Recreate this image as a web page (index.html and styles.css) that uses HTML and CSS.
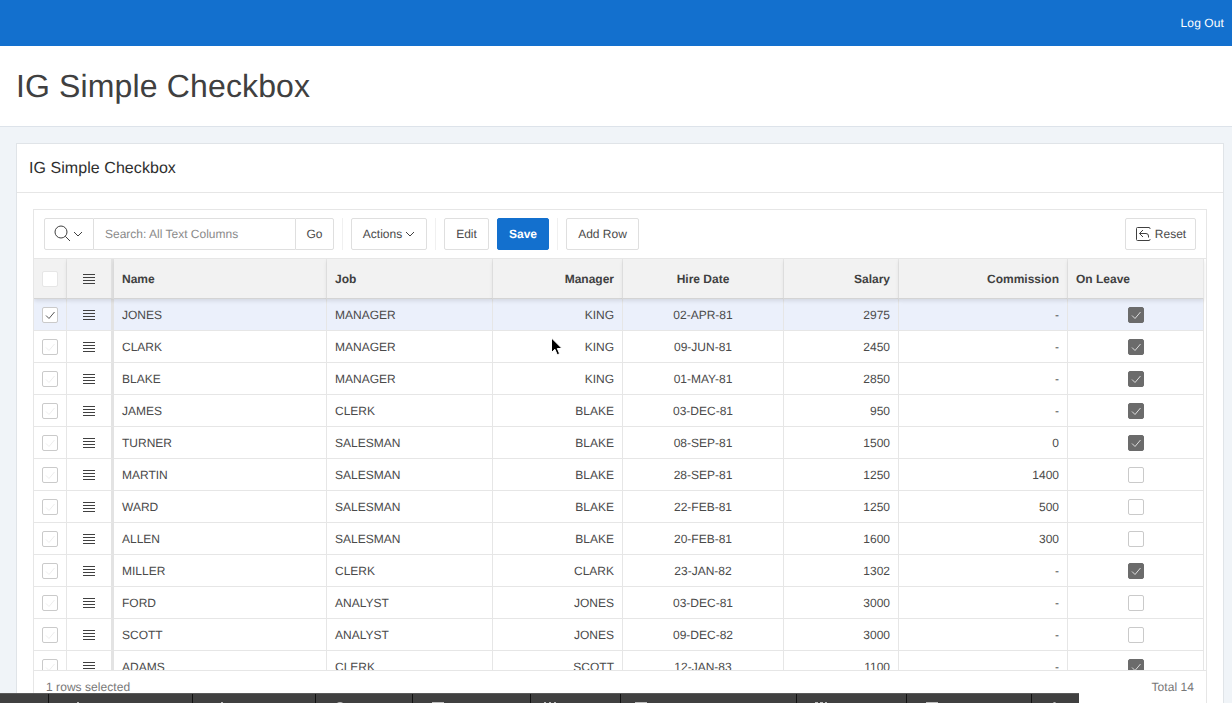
FILE: index.html
```html
<!DOCTYPE html>
<html lang="en">
<head>
<meta charset="utf-8">
<title>IG Simple Checkbox</title>
<link rel="stylesheet" href="styles.css">
</head>
<body>
<svg class="defs" width="0" height="0" aria-hidden="true">
  <symbol id="ham" viewBox="0 0 12 10"><path d="M0 .5h12M0 3.5h12M0 6.5h12M0 9.5h12" stroke="currentColor" stroke-width="1" fill="none"/></symbol>
  <symbol id="tick" viewBox="0 0 16 16"><path d="M4 8.5l3 3 5.5-6.5" stroke="currentColor" stroke-width="1" fill="none"/></symbol>
</svg>
<header class="topbar"><a class="logout">Log Out</a></header>
<div class="titlebar"><h1>IG Simple Checkbox</h1></div>
<main class="page">
  <section class="card">
    <h2 class="card-head">IG Simple Checkbox</h2>
    <div class="card-body">
      <div class="region">
        <div class="toolbar">
          <div class="search">
            <span class="btn search-btn">
              <svg width="18" height="18" viewBox="0 0 18 18"><circle cx="7" cy="7" r="6" fill="none" stroke="#404040"/><path d="M11.3 11.3l4.7 4.7" stroke="#404040" fill="none"/></svg>
              <svg width="10" height="6" viewBox="0 0 10 6"><path d="M1 1l4 4 4-4" stroke="#404040" fill="none"/></svg>
            </span>
            <span class="search-input">Search: All Text Columns</span>
            <span class="btn go">Go</span>
          </div>
          <span class="sep"></span>
          <span class="btn actions">Actions <svg width="10" height="6" viewBox="0 0 10 6"><path d="M1 1l4 4 4-4" stroke="#404040" fill="none"/></svg></span>
          <span class="sep"></span>
          <span class="btn edit">Edit</span>
          <span class="btn save">Save</span>
          <span class="sep"></span>
          <span class="btn add">Add Row</span>
          <span class="btn reset">
            <svg width="16" height="16" viewBox="0 0 16 16"><path d="M15 3V2.5a1 1 0 0 0-1-1H2.5a1 1 0 0 0-1 1v11a1 1 0 0 0 1 1H14a1 1 0 0 0 1-1V13" fill="none" stroke="#404040"/><path d="M8 4L4.5 7.5 8 11M4.5 7.5H11a2.5 2.5 0 0 1 2.5 2.5v1.5" fill="none" stroke="#404040"/></svg>
            Reset
          </span>
        </div>
        <div class="grid-wrap">
          <table class="grid">
            <colgroup>
              <col class="c-sel"><col class="c-act"><col class="c-name"><col class="c-job"><col class="c-mgr"><col class="c-date"><col class="c-sal"><col class="c-comm"><col class="c-leave">
            </colgroup>
            <thead>
              <tr>
                <th class="ctr"><span class="cb blank"></span></th>
                <th class="ctr frozen"><svg class="ham"><use href="#ham"/></svg></th>
                <th>Name</th><th>Job</th><th class="r">Manager</th><th class="ctr">Hire Date</th><th class="r">Salary</th><th class="r">Commission</th><th>On Leave</th>
              </tr>
            </thead>
            <tbody id="rows">
              <tr class="sel"><td class="ctr"><span class="cb"><svg class="tk on"><use href="#tick"/></svg></span></td><td class="ctr frozen"><svg class="ham"><use href="#ham"/></svg></td><td>JONES</td><td>MANAGER</td><td class="r">KING</td><td class="ctr">02-APR-81</td><td class="r">2975</td><td class="r">-</td><td class="ctr"><span class="cb dark"><svg class="tk"><use href="#tick"/></svg></span></td></tr>
              <tr><td class="ctr"><span class="cb"><svg class="tk"><use href="#tick"/></svg></span></td><td class="ctr frozen"><svg class="ham"><use href="#ham"/></svg></td><td>CLARK</td><td>MANAGER</td><td class="r">KING</td><td class="ctr">09-JUN-81</td><td class="r">2450</td><td class="r">-</td><td class="ctr"><span class="cb dark"><svg class="tk"><use href="#tick"/></svg></span></td></tr>
              <tr><td class="ctr"><span class="cb"><svg class="tk"><use href="#tick"/></svg></span></td><td class="ctr frozen"><svg class="ham"><use href="#ham"/></svg></td><td>BLAKE</td><td>MANAGER</td><td class="r">KING</td><td class="ctr">01-MAY-81</td><td class="r">2850</td><td class="r">-</td><td class="ctr"><span class="cb dark"><svg class="tk"><use href="#tick"/></svg></span></td></tr>
              <tr><td class="ctr"><span class="cb"><svg class="tk"><use href="#tick"/></svg></span></td><td class="ctr frozen"><svg class="ham"><use href="#ham"/></svg></td><td>JAMES</td><td>CLERK</td><td class="r">BLAKE</td><td class="ctr">03-DEC-81</td><td class="r">950</td><td class="r">-</td><td class="ctr"><span class="cb dark"><svg class="tk"><use href="#tick"/></svg></span></td></tr>
              <tr><td class="ctr"><span class="cb"><svg class="tk"><use href="#tick"/></svg></span></td><td class="ctr frozen"><svg class="ham"><use href="#ham"/></svg></td><td>TURNER</td><td>SALESMAN</td><td class="r">BLAKE</td><td class="ctr">08-SEP-81</td><td class="r">1500</td><td class="r">0</td><td class="ctr"><span class="cb dark"><svg class="tk"><use href="#tick"/></svg></span></td></tr>
              <tr><td class="ctr"><span class="cb"><svg class="tk"><use href="#tick"/></svg></span></td><td class="ctr frozen"><svg class="ham"><use href="#ham"/></svg></td><td>MARTIN</td><td>SALESMAN</td><td class="r">BLAKE</td><td class="ctr">28-SEP-81</td><td class="r">1250</td><td class="r">1400</td><td class="ctr"><span class="cb"></span></td></tr>
              <tr><td class="ctr"><span class="cb"><svg class="tk"><use href="#tick"/></svg></span></td><td class="ctr frozen"><svg class="ham"><use href="#ham"/></svg></td><td>WARD</td><td>SALESMAN</td><td class="r">BLAKE</td><td class="ctr">22-FEB-81</td><td class="r">1250</td><td class="r">500</td><td class="ctr"><span class="cb"></span></td></tr>
              <tr><td class="ctr"><span class="cb"><svg class="tk"><use href="#tick"/></svg></span></td><td class="ctr frozen"><svg class="ham"><use href="#ham"/></svg></td><td>ALLEN</td><td>SALESMAN</td><td class="r">BLAKE</td><td class="ctr">20-FEB-81</td><td class="r">1600</td><td class="r">300</td><td class="ctr"><span class="cb"></span></td></tr>
              <tr><td class="ctr"><span class="cb"><svg class="tk"><use href="#tick"/></svg></span></td><td class="ctr frozen"><svg class="ham"><use href="#ham"/></svg></td><td>MILLER</td><td>CLERK</td><td class="r">CLARK</td><td class="ctr">23-JAN-82</td><td class="r">1302</td><td class="r">-</td><td class="ctr"><span class="cb dark"><svg class="tk"><use href="#tick"/></svg></span></td></tr>
              <tr><td class="ctr"><span class="cb"><svg class="tk"><use href="#tick"/></svg></span></td><td class="ctr frozen"><svg class="ham"><use href="#ham"/></svg></td><td>FORD</td><td>ANALYST</td><td class="r">JONES</td><td class="ctr">03-DEC-81</td><td class="r">3000</td><td class="r">-</td><td class="ctr"><span class="cb"></span></td></tr>
              <tr><td class="ctr"><span class="cb"><svg class="tk"><use href="#tick"/></svg></span></td><td class="ctr frozen"><svg class="ham"><use href="#ham"/></svg></td><td>SCOTT</td><td>ANALYST</td><td class="r">JONES</td><td class="ctr">09-DEC-82</td><td class="r">3000</td><td class="r">-</td><td class="ctr"><span class="cb"></span></td></tr>
              <tr><td class="ctr"><span class="cb"><svg class="tk"><use href="#tick"/></svg></span></td><td class="ctr frozen"><svg class="ham"><use href="#ham"/></svg></td><td>ADAMS</td><td>CLERK</td><td class="r">SCOTT</td><td class="ctr">12-JAN-83</td><td class="r">1100</td><td class="r">-</td><td class="ctr"><span class="cb dark"><svg class="tk"><use href="#tick"/></svg></span></td></tr>
            </tbody>
          </table>
        </div>
        <div class="grid-foot"><span>1 rows selected</span><span>Total 14</span></div>
      </div>
    </div>
  </section>
</main>
<svg class="cursor" width="14" height="20" viewBox="0 0 14 20"><path d="M1.5 1v14.5l3.4-3.2 2.3 5.4 2.4-1-2.3-5.2h4.7z" fill="#000" stroke="#fff" stroke-width="1"/></svg>
<nav class="dock">
  <span class="cell"></span>
  <span class="cell"><i class="di d-a"></i></span>
  <span class="cell"><i class="di d-b"></i></span>
  <span class="cell"><i class="di d-c"></i></span>
  <span class="cell"><i class="di d-d"></i></span>
  <span class="cell"><i class="di d-e"></i></span>
  <span class="cell"><i class="di d-f"></i></span>
  <span class="cell"><i class="di d-g"></i></span>
  <span class="cell"><i class="di d-h"></i></span>
  <span class="cell"><i class="di d-i"></i></span>
</nav>
</body>
</html>
```
FILE: styles.css
```css
* { box-sizing: border-box; }
html, body { margin: 0; height: 703px; overflow: hidden; }
body { background: #f0f4f8; font-family: "Liberation Sans", Arial, sans-serif; color: #4a4a4a; font-size: 12px; position: relative; text-rendering: geometricPrecision; }
.defs { position: absolute; }

.topbar { height: 46px; background: #1370ce; display: flex; align-items: center; justify-content: flex-end; padding: 0 8px; }
.logout { color: #fff; font-size: 12px; letter-spacing: .1px; }

.titlebar { height: 81px; background: #fff; border-bottom: 1px solid #dde3ea; display: flex; align-items: center; padding: 0 16px 1px; }
.titlebar h1 { margin: 0; font-size: 32px; font-weight: 400; color: #404040; line-height: 40px; letter-spacing: .14px; }

.page { padding: 16px 8px 0 16px; }
.card { background: #fff; border: 1px solid #e0e4e8; width: 1208px; }
.card-head { margin: 0; height: 49px; border-bottom: 1px solid #e6e6e6; padding: 1px 12px 0; font-size: 16px; font-weight: 400; color: #2e2e2e; line-height: 48px; letter-spacing: .06px; }
.card-body { padding: 16px 16px 16px; }

.region { border: 1px solid #e6e6e6; width: 1174px; }

.toolbar { height: 49px; display: flex; align-items: center; padding: 0 10px; border-bottom: 1px solid #e6e6e6; }
.btn { height: 32px; border: 1px solid #dfdfdf; border-radius: 2px; background: #fff; display: inline-flex; align-items: center; justify-content: center; color: #4a4a4a; font-size: 12px; }
.search { display: flex; height: 32px; }
.search-btn { width: 50px; gap: 1px; justify-content: flex-start; padding-left: 9px; border-radius: 2px 0 0 2px; }
.search-input { width: 201px; border: 1px solid #dfdfdf; border-left: 0; border-right: 0; padding-left: 11px; line-height: 30px; color: #8a8a8a; }
.go { width: 39px; border-radius: 0 2px 2px 0; }
.sep { width: 1px; height: 32px; background: #f0f0f0; margin: 0 8px; }
.actions { width: 76px; gap: 3px; }
.edit { width: 45px; }
.save { width: 52px; margin-left: 8px; background: #1370ce; border-color: #1370ce; color: #fff; font-weight: 700; }
.add { width: 73px; }
.reset { width: 71px; margin-left: auto; gap: 4px; }

.grid-wrap { height: 411px; overflow: hidden; width: 1172px; }
.grid { border-collapse: separate; border-spacing: 0; table-layout: fixed; width: 1170px; }
.c-sel { width: 33px; } .c-act { width: 47px; } .c-name { width: 213px; } .c-job { width: 166px; } .c-mgr { width: 130px; } .c-date { width: 161px; } .c-sal { width: 115px; } .c-comm { width: 169px; } .c-leave { width: 136px; }

th, td { padding: 0 8px; border-right: 1px solid #e6e6e6; text-align: left; white-space: nowrap; overflow: hidden; }
th { height: 40px; background: #f2f2f2; font-size: 12px; font-weight: 700; color: #404040; border-bottom: 1px solid #d4d4d4; box-shadow: 0 2px 4px rgba(0,0,0,.1); position: relative; z-index: 1; overflow: visible; }
thead tr { position: relative; z-index: 2; }
td { height: 32px; border-bottom: 1px solid #e6e6e6; color: #4a4a4a; font-size: 12px; }
.sel td { background: #ebf0fb; }
.r { text-align: right; }
th.ctr, td.ctr { text-align: center; padding: 0; }
.frozen { border-right: 3px solid #e3e3e3; }

.ham { display: inline-block; width: 12px; height: 10px; color: #404040; vertical-align: middle; }
.cb { display: inline-block; width: 16px; height: 16px; border: 1px solid #cacaca; border-radius: 2px; background: #fff; vertical-align: middle; position: relative; }
.cb.blank { border-color: #e6e6e6; }
.cb.dark { background: #6b6b6b; border-color: #6b6b6b; }
.tk { position: absolute; left: -1px; top: -1px; width: 16px; height: 16px; color: #eee; }
.tk.on { color: #555; }
.dark .tk { color: #ddd; }

.grid-foot { height: 50px; border-top: 1px solid #e6e6e6; display: flex; justify-content: space-between; padding: 9px 12px; color: #777; font-size: 12px; letter-spacing: .05px; background: #fff; position: relative; z-index: 3; width: 1172px; }

.cursor { position: absolute; left: 550px; top: 337px; z-index: 5; }

.dock { position: absolute; left: 0; top: 693px; width: 1079px; height: 10px; background: #404040; border-top: 1px solid #5a5a5a; display: grid; grid-template-columns: 49px 144px 123px 97px 118px 90px 176px 110px 125px 47px; z-index: 6; }
.cell { border-right: 1px solid #111; padding-top: 8px; display: block; overflow: hidden; }
.cell:last-child { border-right: 0; }
.di { display: block; height: 4px; background: #bdbdbd; }
.d-a { width: 2px; margin-left: 28px; }
.d-b { width: 2px; margin-left: 28px; }
.d-c { width: 8px; margin-left: 20px; border-radius: 4px 4px 0 0; }
.d-d { width: 12px; margin-left: 19px; }
.d-e { width: 14px; margin-left: 13px; background: repeating-linear-gradient(90deg, #bdbdbd 0 2px, transparent 2px 5px); }
.d-f { width: 12px; margin-left: 14px; }
.d-g { width: 12px; margin-left: 18px; background: repeating-linear-gradient(90deg, #bdbdbd 0 3px, #404040 3px 5px); }
.d-h { width: 12px; margin-left: 19px; border: 1px solid #bdbdbd; background: none; }
.d-i { width: 3px; margin-left: 21px; border-radius: 2px 2px 0 0; }
```
